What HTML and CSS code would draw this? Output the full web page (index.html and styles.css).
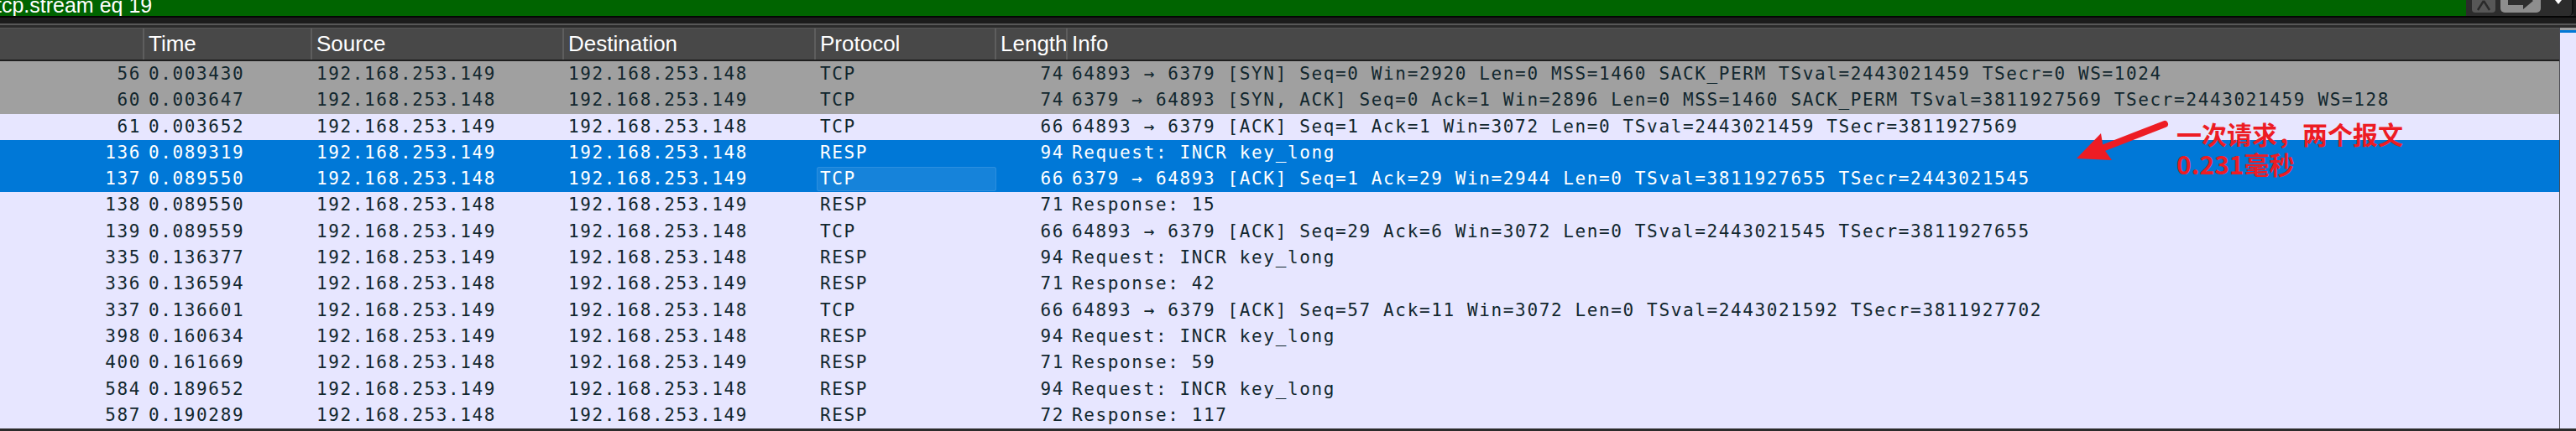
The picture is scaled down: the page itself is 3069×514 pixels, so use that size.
FILE: index.html
```html
<!DOCTYPE html>
<html lang="zh">
<head>
  <meta charset="UTF-8" />
  <title>tcp.stream eq 19</title>
  <link rel="stylesheet" href="styles.css">
</head>
<body>
  <div class="topbar">
    <div class="filter"><span>tcp.stream eq 19</span></div>
    <div class="filter-tools">
      <div class="btn-clear">
        <svg width="28" height="15" viewBox="0 0 28 15"><path d="M14 1 L7 12 M14 1 L21 12" stroke="#2a2a2a" stroke-width="2.4" fill="none"/></svg>
      </div>
      <div class="btn-apply">
        <svg width="48" height="15" viewBox="0 0 48 15"><path d="M9 -4 H27 V-9 L39 1 L27 11 V6 H9 Z" fill="#2e2e2e"/></svg>
      </div>
      <div class="drop"></div>
    </div>
    <div class="edge"></div>
  </div>
  <div class="divider"></div>

  <div class="main">
    <div class="list">
      <div class="header">
        <div class="col"></div>
        <div class="col">Time</div>
        <div class="col">Source</div>
        <div class="col">Destination</div>
        <div class="col">Protocol</div>
        <div class="col">Length</div>
        <div class="col">Info</div>
      </div>

      <div class="row syn"><span class="num">56</span><span>0.003430</span><span>192.168.253.149</span><span>192.168.253.148</span><span>TCP</span><span class="num">74</span><span>64893 → 6379 [SYN] Seq=0 Win=2920 Len=0 MSS=1460 SACK_PERM TSval=2443021459 TSecr=0 WS=1024</span></div>
      <div class="row syn"><span class="num">60</span><span>0.003647</span><span>192.168.253.148</span><span>192.168.253.149</span><span>TCP</span><span class="num">74</span><span>6379 → 64893 [SYN, ACK] Seq=0 Ack=1 Win=2896 Len=0 MSS=1460 SACK_PERM TSval=3811927569 TSecr=2443021459 WS=128</span></div>
      <div class="row"><span class="num">61</span><span>0.003652</span><span>192.168.253.149</span><span>192.168.253.148</span><span>TCP</span><span class="num">66</span><span>64893 → 6379 [ACK] Seq=1 Ack=1 Win=3072 Len=0 TSval=2443021459 TSecr=3811927569</span></div>
      <div class="row sel"><span class="num">136</span><span>0.089319</span><span>192.168.253.149</span><span>192.168.253.148</span><span>RESP</span><span class="num">94</span><span>Request: INCR key_long</span></div>
      <div class="row sel"><span class="num">137</span><span>0.089550</span><span>192.168.253.148</span><span>192.168.253.149</span><span class="focus">TCP</span><span class="num">66</span><span>6379 → 64893 [ACK] Seq=1 Ack=29 Win=2944 Len=0 TSval=3811927655 TSecr=2443021545</span></div>
      <div class="row"><span class="num">138</span><span>0.089550</span><span>192.168.253.148</span><span>192.168.253.149</span><span>RESP</span><span class="num">71</span><span>Response: 15</span></div>
      <div class="row"><span class="num">139</span><span>0.089559</span><span>192.168.253.149</span><span>192.168.253.148</span><span>TCP</span><span class="num">66</span><span>64893 → 6379 [ACK] Seq=29 Ack=6 Win=3072 Len=0 TSval=2443021545 TSecr=3811927655</span></div>
      <div class="row"><span class="num">335</span><span>0.136377</span><span>192.168.253.149</span><span>192.168.253.148</span><span>RESP</span><span class="num">94</span><span>Request: INCR key_long</span></div>
      <div class="row"><span class="num">336</span><span>0.136594</span><span>192.168.253.148</span><span>192.168.253.149</span><span>RESP</span><span class="num">71</span><span>Response: 42</span></div>
      <div class="row"><span class="num">337</span><span>0.136601</span><span>192.168.253.149</span><span>192.168.253.148</span><span>TCP</span><span class="num">66</span><span>64893 → 6379 [ACK] Seq=57 Ack=11 Win=3072 Len=0 TSval=2443021592 TSecr=3811927702</span></div>
      <div class="row"><span class="num">398</span><span>0.160634</span><span>192.168.253.149</span><span>192.168.253.148</span><span>RESP</span><span class="num">94</span><span>Request: INCR key_long</span></div>
      <div class="row"><span class="num">400</span><span>0.161669</span><span>192.168.253.148</span><span>192.168.253.149</span><span>RESP</span><span class="num">71</span><span>Response: 59</span></div>
      <div class="row"><span class="num">584</span><span>0.189652</span><span>192.168.253.149</span><span>192.168.253.148</span><span>RESP</span><span class="num">94</span><span>Request: INCR key_long</span></div>
      <div class="row"><span class="num">587</span><span>0.190289</span><span>192.168.253.148</span><span>192.168.253.149</span><span>RESP</span><span class="num">72</span><span>Response: 117</span></div>
    </div>
    <div class="minimap">
      <div class="mm-syn"></div>
      <div class="mm-sel"></div>
    </div>
  </div>

  <!-- annotation drawn over the packet list -->
  <svg class="note-arrow" width="130" height="60" viewBox="0 0 130 60">
    <line x1="119" y1="8" x2="47" y2="36" stroke="#ed1c24" stroke-width="8" stroke-linecap="round"/>
    <polygon points="14,49 43,19 46,37 56,51" fill="#ed1c24"/>
  </svg>
  <div class="note">一次请求，两个报文<br>0.231毫秒</div>
</body>
</html>
```

FILE: styles.css
```css
* {
  box-sizing: border-box;
}
html, body {
  margin: 0;
  padding: 0;
}
body {
  width: 3069px;
  height: 514px;
  overflow: hidden;
  position: relative;
  background: #2b2b2b;
  font-family: "Liberation Sans", Arial, sans-serif;
}

/* display filter bar, cut at the top */
.topbar {
  display: flex;
  height: 21px;
  background: #2c2c2c;
  border-bottom: 2px solid #050505;
}
.filter {
  flex: 1;
  background: #006400;
  color: #fff;
  font-size: 25px;
  line-height: 25px;
  overflow: hidden;
  white-space: nowrap;
}
.filter span {
  display: block;
  margin: -6px 0 0 -5px;
}
.filter-tools {
  width: 128px;
  display: flex;
  align-items: flex-start;
  padding-left: 7px;
  border-right: 2px solid #0f0f0f;
  border-bottom-right-radius: 5px;
}
.btn-clear {
  width: 28px;
  height: 15px;
  background: #575757;
  border-radius: 0 0 4px 4px;
}
.btn-apply {
  width: 48px;
  height: 15px;
  margin-left: 6px;
  background: #8e8e8e;
  border-radius: 0 0 5px 5px;
}
.btn-clear svg, .btn-apply svg {
  display: block;
}
.drop {
  margin-left: 17px;
  width: 0;
  height: 0;
  border-left: 4px solid transparent;
  border-right: 4px solid transparent;
  border-top: 5px solid #fff;
}
.edge {
  width: 3px;
  background: #1c1c1c;
}
.divider {
  height: 9px;
  background: #1c1c1c;
  border-bottom: 2px solid #585858;
}

/* packet list */
.main {
  display: flex;
  margin-top: 3px;
}
.list {
  flex: 1;
}
.header, .row {
  display: grid;
  grid-template-columns: 170px 200px 300px 300px 215px 85px 1fr;
}
.header {
  height: 40px;
  background: #484848;
  border-top: 1px solid #575757;
  border-bottom: 2px solid #1f1f1f;
}
.header .col {
  color: #fff;
  font-size: 26px;
  line-height: 37px;
  padding-left: 5px;
  border-left: 2px solid #5e5e5e;
  overflow: hidden;
  white-space: nowrap;
}
.header .col:first-child {
  border-left: none;
}
.row {
  height: 31.3px;
  line-height: 31px;
  font-family: "DejaVu Sans Mono", "Liberation Mono", monospace;
  font-size: 21px;
  letter-spacing: 1.63px;
  color: #12272e;
  background: #e7e6ff;
  white-space: nowrap;
}
.row span {
  padding-left: 7px;
  overflow: hidden;
}
.row .num {
  text-align: right;
  padding: 0 2px 0 0;
}
.row.syn {
  background: #a0a0a0;
}
.row.sel {
  background: #0078d7;
  color: #fff;
}
.row .focus {
  margin: 1px -2px 1px 3px;
  padding-left: 4px;
  line-height: 29px;
  background: #1683da;
  border-radius: 3px;
  box-shadow: inset 0 0 0 1px #2c8fdf;
}

/* scrollbar minimap */
.minimap {
  width: 20px;
  background: #e7e6ff;
  border-left: 1px solid #4a4a52;
}
.mm-syn {
  height: 3px;
  background: #a0a0a0;
}
.mm-sel {
  height: 3px;
  background: #0078d7;
}

/* red annotation */
.note-arrow {
  position: absolute;
  left: 2460px;
  top: 140px;
}
.note {
  position: absolute;
  left: 2593px;
  top: 141px;
  color: #ed1c24;
  font-family: "Noto Sans CJK SC", sans-serif;
  font-weight: 700;
  font-size: 30px;
  line-height: 36px;
}
```
